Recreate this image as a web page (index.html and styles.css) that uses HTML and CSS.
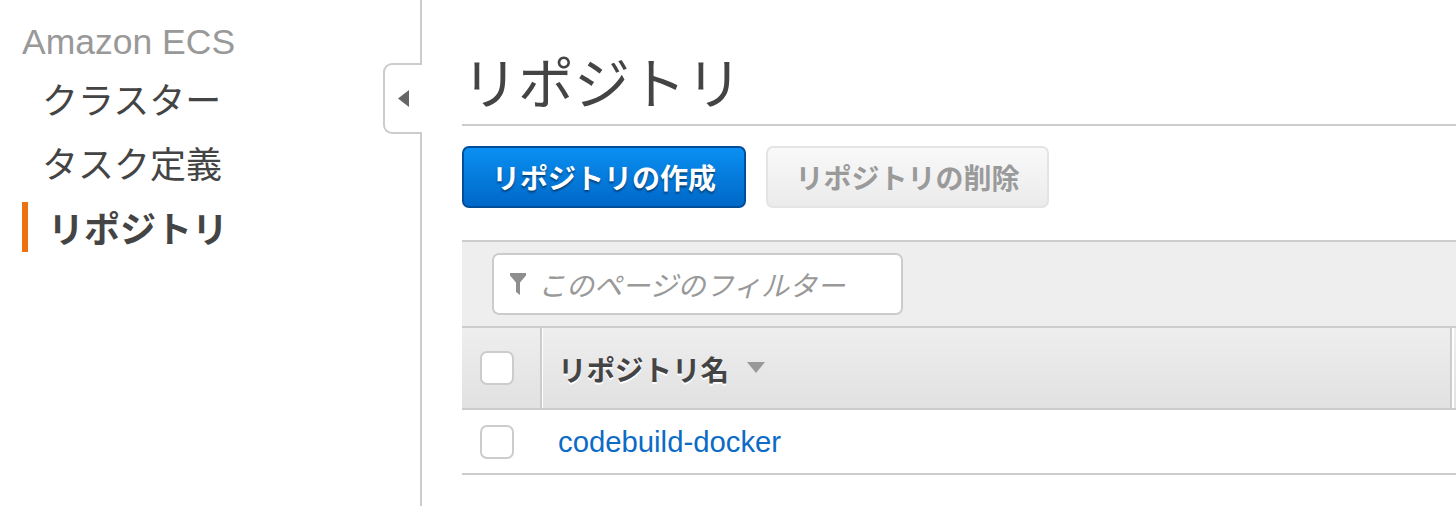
FILE: index.html
```html
<!DOCTYPE html>
<html lang="ja">
<head>
<meta charset="utf-8">
<title>Amazon ECS - リポジトリ</title>
<link rel="stylesheet" href="styles.css">
</head>
<body>
<div class="layout">
  <aside class="sidebar">
    <div class="brand">Amazon ECS</div>
    <nav class="nav">
      <a class="nav-item">クラスター</a>
      <a class="nav-item">タスク定義</a>
      <a class="nav-item active">リポジトリ</a>
    </nav>
    <button class="collapse" aria-label="collapse">
      <svg width="11" height="17" viewBox="0 0 11 17"><path d="M11 0 L0 8.5 L11 17 Z" fill="#666"/></svg>
    </button>
  </aside>
  <main class="main">
    <h1 class="title">リポジトリ</h1>
    <div class="actions">
      <button class="btn btn-primary">リポジトリの作成</button>
      <button class="btn btn-disabled">リポジトリの削除</button>
    </div>
    <div class="panel">
      <div class="filter-bar">
        <div class="filter">
          <svg class="funnel" width="16" height="22" viewBox="0 0 16 22"><path d="M0 0 H16 V2.5 L10 9.5 V22 L6 19 V9.5 L0 2.5 Z" fill="#8e8e8e"/></svg>
          <span class="placeholder">このページのフィルター</span>
        </div>
      </div>
      <div class="grid head">
        <div class="cell c1"><span class="checkbox"></span></div>
        <div class="cell c2"><span class="th">リポジトリ名</span><span class="sort"></span></div>
        <div class="cell c3"></div>
      </div>
      <div class="grid row">
        <div class="cell c1"><span class="checkbox"></span></div>
        <div class="cell c2"><a class="link">codebuild-docker</a></div>
        <div class="cell c3"></div>
      </div>
    </div>
  </main>
</div>
</body>
</html>
```
FILE: styles.css
```css
html, body {
  margin: 0;
  padding: 0;
  background: #fff;
}
body {
  font-family: "Noto Sans CJK JP", "Liberation Sans", sans-serif;
  color: #444;
  height: 506px;
  overflow: hidden;
}
.layout {
  display: flex;
  height: 506px;
}
.sidebar {
  position: relative;
  width: 398px;
  flex: none;
  border-right: 2px solid #ccc;
  padding: 22px 0 0 22px;
}
.brand {
  font-family: "Liberation Sans", sans-serif;
  font-size: 35.5px;
  line-height: 40px;
  color: #999;
}
.nav {
  display: flex;
  flex-direction: column;
  gap: 14px;
  margin-top: 11px;
}
.nav-item {
  display: block;
  height: 50px;
  line-height: 50px;
  font-size: 36px;
  padding-left: 20px;
  color: #444;
  white-space: nowrap;
}
.nav-item.active {
  border-left: 6px solid #ec7211;
  padding-left: 20px;
  font-weight: bold;
  margin-top: 1px;
}
.collapse {
  position: absolute;
  top: 63px;
  right: -2px;
  width: 39px;
  height: 71px;
  box-sizing: border-box;
  border: 2px solid #ccc;
  border-right: none;
  border-radius: 9px 0 0 9px;
  background: #fff;
  padding: 0 0 0 13px;
  display: flex;
  align-items: center;
  cursor: pointer;
}
.main {
  flex: 1;
  padding-left: 40px;
  min-width: 0;
}
.title {
  margin: 48px 0 0 0;
  font-size: 56px;
  line-height: 64px;
  font-weight: normal;
  color: #444;
  padding-bottom: 12px;
  border-bottom: 2px solid #ccc;
}
.actions {
  display: flex;
  gap: 20px;
  margin-top: 20px;
}
.btn {
  height: 62px;
  box-sizing: border-box;
  border-radius: 7px;
  font-family: "Noto Sans CJK JP", sans-serif;
  font-size: 28px;
  font-weight: bold;
  padding: 0;
  cursor: pointer;
}
.btn-primary {
  width: 284px;
  color: #fff;
  border: 2px solid #004e99;
  background: linear-gradient(#0a8ff2, #0068c8);
  text-shadow: 0 2px 2px rgba(0, 0, 0, 0.45);
}
.btn-disabled {
  width: 283px;
  color: #9a9a9a;
  border: 2px solid #e4e4e4;
  background: linear-gradient(#f9f9f9, #ebebeb);
}
.panel {
  margin-top: 32px;
  border-top: 2px solid #ccc;
}
.filter-bar {
  background: #eee;
  padding: 11px 30px 11px 30px;
}
.filter {
  width: 411px;
  height: 62px;
  box-sizing: border-box;
  border: 2px solid #ccc;
  border-radius: 7px;
  background: #fff;
  display: flex;
  align-items: center;
  padding-left: 16px;
  gap: 12px;
}
.funnel {
  flex: none;
}
.placeholder {
  font-size: 28px;
  font-style: italic;
  color: #999;
}
.grid {
  display: grid;
  grid-template-columns: 80px 910px 1fr;
}
.head {
  height: 84px;
  box-sizing: border-box;
  border-top: 2px solid #ccc;
  border-bottom: 2px solid #ccc;
  background: linear-gradient(#eeeeee, #e1e1e1);
}
.row {
  height: 65px;
  box-sizing: border-box;
  border-bottom: 2px solid #ccc;
}
.cell {
  display: flex;
  align-items: center;
  box-sizing: border-box;
}
.c1 {
  padding-left: 18px;
}
.head .c1 {
  border-right: 2px solid #ccc;
}
.head .c2 {
  padding-left: 16px;
  border-right: 2px solid #ccc;
  box-shadow: inset 1px 0 0 #fff;
}
.head .c3 {
  box-shadow: inset 2px 0 0 #fff;
}
.row .c2 {
  padding-left: 16px;
}
.checkbox {
  width: 34px;
  height: 34px;
  box-sizing: border-box;
  border: 2px solid #ccc;
  border-radius: 7px;
  background: #fff;
}
.th {
  font-size: 28.5px;
  font-weight: bold;
  color: #444;
  text-shadow: 0 2px 0 #fff;
}
.sort {
  width: 0;
  height: 0;
  margin-left: 18px;
  margin-top: -2px;
  border-left: 9px solid transparent;
  border-right: 9px solid transparent;
  border-top: 11px solid #999;
}
.link {
  font-family: "Liberation Sans", sans-serif;
  font-size: 29.3px;
  color: #0b6bc6;
  text-decoration: none;
}
```
